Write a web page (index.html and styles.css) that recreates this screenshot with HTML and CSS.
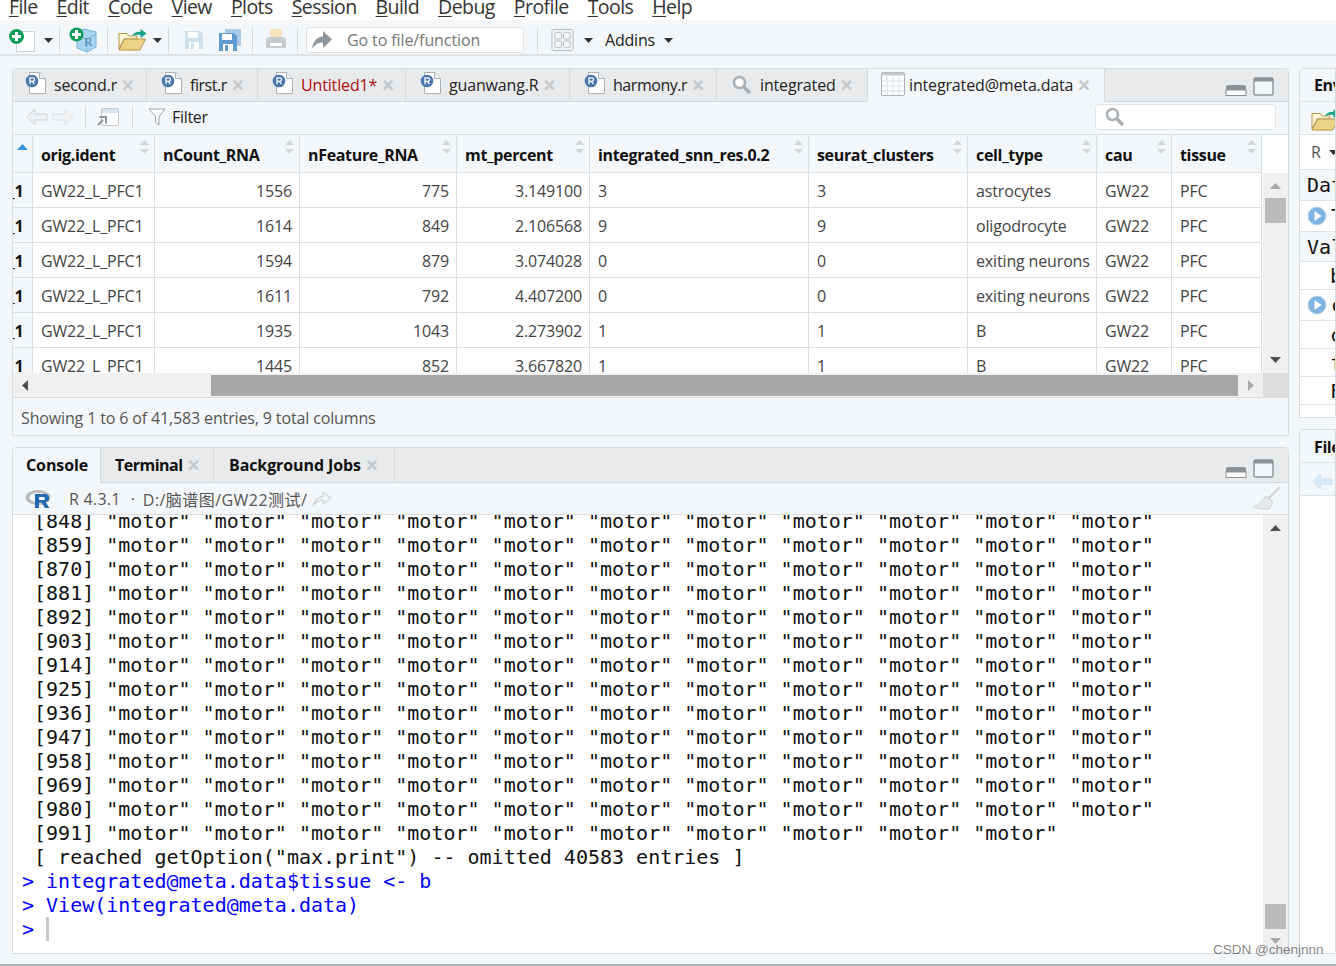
FILE: index.html
```html
<!DOCTYPE html>
<html lang="en">
<head>
<meta charset="utf-8">
<title>RStudio</title>
<link rel="stylesheet" href="styles.css">
</head>
<body>
<svg class="defs" width="0" height="0" aria-hidden="true">
  <defs>
    <symbol id="rdoc" viewBox="0 0 22 24">
      <path d="M4.5 1.5H14.5L20.5 7.5V22.5H4.5Z" fill="#fff" stroke="#a9b0b6"/>
      <path d="M14.5 1.5V7.5H20.5" fill="#eef1f3" stroke="#a9b0b6"/>
      <circle cx="7" cy="10" r="6.3" fill="#4a76ad"/>
      <path d="M5 13.2V6.8H7.8A1.8 1.8 0 0 1 7.8 10.4H5M7.4 10.4L9.4 13.2" fill="none" stroke="#fff" stroke-width="1.3"/>
    </symbol>
    <symbol id="folder" viewBox="0 0 30 24">
      <path d="M2 8V5.5H10L12 8H20V11H7L2 21Z" fill="#fff6d8" stroke="#b2954a"/>
      <path d="M2 22L7.5 11H28.5L23 22Z" fill="#ecd388" stroke="#b2954a"/>
      <path d="M15 8C17 4 21 3.500 23.500 4V1L29.500 5.500L23.500 10V7C20.500 6.500 18 7 15 8Z" fill="#17a589"/>
    </symbol>
    <symbol id="caret" viewBox="0 0 9 5"><path d="M0 0H9L4.500 5Z" fill="#333"/></symbol>
    <symbol id="lens" viewBox="0 0 20 20">
      <circle cx="7.500" cy="7.500" r="5.500" fill="#fff" stroke="#a9b1b6" stroke-width="2.600"/>
      <path d="M11.500 11.500L18 18" stroke="#a9b1b6" stroke-width="3.600"/>
    </symbol>
    <symbol id="sort" viewBox="0 0 9 14"><path d="M4.500 0L9 5H0ZM0 9H9L4.500 14Z" fill="#d3d6d9"/></symbol>
    <symbol id="floppy" viewBox="0 0 20 20">
      <path d="M1 1H16L19 4V19H1Z" fill="currentColor"/>
      <rect x="4" y="2" width="10" height="6" fill="#fff"/>
      <rect x="5" y="12" width="10" height="7" fill="#fff"/>
      <rect x="7" y="13" width="3" height="6" fill="currentColor"/>
    </symbol>
    <symbol id="circle-arrow" viewBox="0 0 20 20">
      <circle cx="10" cy="10" r="9" fill="#7fb3e0" stroke="#b8d3ea"/>
      <path d="M7.500 5L14.500 10L7.500 15Z" fill="#fff"/>
    </symbol>
    <symbol id="min" viewBox="0 0 22 12">
      <path d="M1 10V3.500Q1 1 3.500 1H18.500Q21 1 21 3.500V10Z" fill="#8b9296"/>
      <rect x="1" y="6" width="20" height="5.500" fill="#fff" stroke="#8b9296"/>
    </symbol>
    <symbol id="max" viewBox="0 0 21 19">
      <rect x="1" y="1" width="19" height="17" rx="1.500" fill="#f4f7f9" stroke="#8b9296" stroke-width="1.400"/>
      <rect x="1" y="1" width="19" height="3.500" fill="#8b9296"/>
    </symbol>
  </defs>
</svg>

<div class="app">
  <nav class="menubar">
    <span class="menu"><u>F</u>ile</span>
    <span class="menu"><u>E</u>dit</span>
    <span class="menu"><u>C</u>ode</span>
    <span class="menu"><u>V</u>iew</span>
    <span class="menu"><u>P</u>lots</span>
    <span class="menu"><u>S</u>ession</span>
    <span class="menu"><u>B</u>uild</span>
    <span class="menu"><u>D</u>ebug</span>
    <span class="menu"><u>P</u>rofile</span>
    <span class="menu"><u>T</u>ools</span>
    <span class="menu"><u>H</u>elp</span>
  </nav>

  <div class="toolbar">
    <svg class="i-new" viewBox="0 0 28 24">
      <rect x="8.500" y="3.500" width="18" height="20" fill="#fff" stroke="#cfd4d8"/>
      <circle cx="8.500" cy="8.500" r="7.500" fill="#0f9d58"/>
      <path d="M8.500 4V13M4 8.500H13" stroke="#fff" stroke-width="3"/>
    </svg>
    <svg class="caret c-new"><use href="#caret"/></svg>
    <span class="sep s-1"></span>
    <svg class="i-proj" viewBox="0 0 30 26">
      <path d="M8 5L15 2L27 5V20L18 25L8 21Z" fill="#a9d5ee" stroke="#6fb1d8"/>
      <path d="M8 9L18 12L27 7M18 12V25" fill="none" stroke="#7fbde0"/>
      <circle cx="7.500" cy="7.500" r="7" fill="#0f9d58"/>
      <path d="M7.500 3V12M3 7.500H12" stroke="#fff" stroke-width="3"/>
      <text x="15" y="19" class="cube-r">R</text>
    </svg>
    <span class="sep s-2"></span>
    <svg class="i-open"><use href="#folder"/></svg>
    <svg class="caret c-open"><use href="#caret"/></svg>
    <span class="sep s-3"></span>
    <svg class="i-save"><use href="#floppy"/></svg>
    <svg class="i-saveall" viewBox="0 0 24 24">
      <rect x="7" y="1" width="16" height="17" fill="#a9cbe8"/>
      <path d="M1 5H16L19 8V23H1Z" fill="#5f9ad0"/>
      <rect x="4" y="6" width="10" height="6" fill="#fff"/>
      <rect x="5" y="16" width="10" height="7" fill="#fff"/>
      <rect x="7" y="17" width="3" height="6" fill="#5f9ad0"/>
    </svg>
    <span class="sep s-4"></span>
    <svg class="i-print" viewBox="0 0 22 22">
      <rect x="5" y="0" width="12" height="10" fill="#f2e3bd"/>
      <path d="M1 12Q1 8 5 8H17Q21 8 21 12V19H1Z" fill="#c3cad0"/>
      <rect x="5" y="14" width="12" height="3" fill="#fff"/>
    </svg>
    <span class="sep s-5"></span>
    <div class="goto">
      <svg class="i-goto" viewBox="0 0 20 20"><path d="M0 19C1 11 5 7 11 6.500V1L20 9.500L11 18V12.500C7 12.500 3 14 0 19Z" fill="#8f979e"/></svg>
      <span class="goto-text">Go to file/function</span>
    </div>
    <span class="sep s-6"></span>
    <svg class="i-grid" viewBox="0 0 24 24">
      <rect x="1" y="1" width="22" height="22" rx="2" fill="#f4f7f9" stroke="#b3bac0"/>
      <rect x="4" y="4" width="7" height="7" rx="1" fill="none" stroke="#b3bac0"/>
      <rect x="13" y="4" width="7" height="7" rx="1" fill="none" stroke="#b3bac0"/>
      <rect x="4" y="13" width="7" height="7" rx="1" fill="none" stroke="#b3bac0"/>
      <rect x="13" y="13" width="7" height="7" rx="1" fill="none" stroke="#b3bac0"/>
    </svg>
    <svg class="caret c-grid"><use href="#caret"/></svg>
    <span class="addins">Addins</span>
    <svg class="caret c-addins"><use href="#caret"/></svg>
  </div>

  <div class="workspace">
    <div class="left">
      <section class="pane source">
        <div class="tabs">
          <div class="tab t-second"><svg class="doc"><use href="#rdoc"/></svg><span>second.r</span><b class="x">×</b></div>
          <div class="tab t-first"><svg class="doc"><use href="#rdoc"/></svg><span class="tight">first.r</span><b class="x">×</b></div>
          <div class="tab t-untitled"><svg class="doc"><use href="#rdoc"/></svg><span class="unsaved">Untitled1*</span><b class="x">×</b></div>
          <div class="tab t-guan"><svg class="doc"><use href="#rdoc"/></svg><span>guanwang.R</span><b class="x">×</b></div>
          <div class="tab t-harm"><svg class="doc"><use href="#rdoc"/></svg><span class="tight">harmony.r</span><b class="x">×</b></div>
          <div class="tab t-int"><svg class="tab-lens"><use href="#lens"/></svg><span>integrated</span><b class="x">×</b></div>
          <div class="tab active t-meta">
            <svg class="tab-grid" viewBox="0 0 24 24">
              <rect x="0.500" y="0.500" width="23" height="23" rx="1.500" fill="#fff" stroke="#a9b0b6"/>
              <rect x="0.500" y="0.500" width="23" height="3" fill="#c4c9cd"/>
              <path d="M6 4V23M12 4V23M18 4V23M1 9H23M1 14H23M1 19H23" stroke="#d5deea"/>
            </svg>
            <span>integrated@meta.data</span><b class="x">×</b>
          </div>
          <div class="tab-fill">
            <svg class="pane-min"><use href="#min"/></svg>
            <svg class="pane-max"><use href="#max"/></svg>
          </div>
        </div>
        <div class="filterbar">
          <svg class="nav-back" viewBox="0 0 22 18"><path d="M9 1L1 9L9 17V12H21V6H9Z" fill="#eef1f3" stroke="#cdd2d6"/></svg>
          <svg class="nav-fwd" viewBox="0 0 22 18"><path d="M13 1L21 9L13 17V12H1V6H13Z" fill="#f1f3f5" stroke="#dde0e3"/></svg>
          <span class="sep f-s1"></span>
          <svg class="i-pop" viewBox="0 0 22 18">
            <rect x="4.500" y="0.500" width="17" height="17" rx="1.500" fill="#fff" stroke="#c4cace"/>
            <rect x="5" y="1" width="16" height="4" fill="#d3e5f5"/>
            <path d="M1 17L6 12M2.500 9H9V15.500" fill="none" stroke="#8f979e" stroke-width="2"/>
          </svg>
          <span class="sep f-s2"></span>
          <svg class="i-funnel" viewBox="0 0 18 18"><path d="M1 1H17L11 8.500V17L7.500 14V8.500Z" fill="#fff" stroke="#9aa2a8"/></svg>
          <span class="filter-label">Filter</span>
          <div class="search"><svg class="search-lens"><use href="#lens"/></svg></div>
        </div>

        <div class="dataview">
          <div class="grid-clip">
            <table class="data">
              <colgroup>
                <col class="c0"><col class="c1"><col class="c2"><col class="c3"><col class="c4"><col class="c5"><col class="c6"><col class="c7"><col class="c8"><col class="c9">
              </colgroup>
              <thead>
                <tr>
                  <th class="corner"><svg class="sort-up" viewBox="0 0 11 6"><path d="M5.500 0L11 6H0Z" fill="#3a95e0"/></svg></th>
                  <th>orig.ident<svg class="sort"><use href="#sort"/></svg></th>
                  <th>nCount_RNA<svg class="sort"><use href="#sort"/></svg></th>
                  <th>nFeature_RNA<svg class="sort"><use href="#sort"/></svg></th>
                  <th>mt_percent<svg class="sort"><use href="#sort"/></svg></th>
                  <th>integrated_snn_res.0.2<svg class="sort"><use href="#sort"/></svg></th>
                  <th>seurat_clusters<svg class="sort"><use href="#sort"/></svg></th>
                  <th>cell_type<svg class="sort"><use href="#sort"/></svg></th>
                  <th>cau<svg class="sort"><use href="#sort"/></svg></th>
                  <th>tissue<svg class="sort"><use href="#sort"/></svg></th>
                </tr>
              </thead>
              <tbody>
                <tr><td class="rn">_1</td><td>GW22_L_PFC1</td><td class="n">1556</td><td class="n">775</td><td class="n">3.149100</td><td>3</td><td>3</td><td>astrocytes</td><td>GW22</td><td>PFC</td></tr>
                <tr><td class="rn">_1</td><td>GW22_L_PFC1</td><td class="n">1614</td><td class="n">849</td><td class="n">2.106568</td><td>9</td><td>9</td><td>oligodrocyte</td><td>GW22</td><td>PFC</td></tr>
                <tr><td class="rn">_1</td><td>GW22_L_PFC1</td><td class="n">1594</td><td class="n">879</td><td class="n">3.074028</td><td>0</td><td>0</td><td>exiting neurons</td><td>GW22</td><td>PFC</td></tr>
                <tr><td class="rn">_1</td><td>GW22_L_PFC1</td><td class="n">1611</td><td class="n">792</td><td class="n">4.407200</td><td>0</td><td>0</td><td>exiting neurons</td><td>GW22</td><td>PFC</td></tr>
                <tr><td class="rn">_1</td><td>GW22_L_PFC1</td><td class="n">1935</td><td class="n">1043</td><td class="n">2.273902</td><td>1</td><td>1</td><td>B</td><td>GW22</td><td>PFC</td></tr>
                <tr><td class="rn">_1</td><td>GW22_L_PFC1</td><td class="n">1445</td><td class="n">852</td><td class="n">3.667820</td><td>1</td><td>1</td><td>B</td><td>GW22</td><td>PFC</td></tr>
              </tbody>
            </table>
          </div>
          <div class="vscroll">
            <svg class="arrow-up" viewBox="0 0 11 6"><path d="M5.500 0L11 6H0Z" fill="#a8a8a8"/></svg>
            <span class="vthumb"></span>
            <svg class="arrow-down" viewBox="0 0 11 6"><path d="M0 0H11L5.500 6Z" fill="#505050"/></svg>
          </div>
        </div>
        <div class="hscroll">
          <svg class="arrow-left" viewBox="0 0 6 11"><path d="M6 0V11L0 5.500Z" fill="#505050"/></svg>
          <span class="hthumb"></span>
          <svg class="arrow-right" viewBox="0 0 6 11"><path d="M0 0V11L6 5.500Z" fill="#a8a8a8"/></svg>
          <span class="hcorner"></span>
        </div>
        <div class="status">Showing 1 to 6 of 41,583 entries, 9 total columns</div>
      </section>

      <section class="pane console">
        <div class="tabs ctabs">
          <div class="ctab active c-console">Console</div>
          <div class="ctab c-terminal">Terminal<b class="x">×</b></div>
          <div class="ctab c-jobs">Background Jobs<b class="x">×</b></div>
          <div class="tab-fill">
            <svg class="pane-min"><use href="#min"/></svg>
            <svg class="pane-max"><use href="#max"/></svg>
          </div>
        </div>
        <div class="consolebar">
          <svg class="r-logo" viewBox="0 0 28 20">
            <ellipse cx="13" cy="8.500" rx="12.500" ry="7.500" fill="#b9bcc0"/>
            <ellipse cx="13" cy="8.500" rx="8.500" ry="4.800" fill="#f4f7f9"/>
            <path d="M10 19V5H19.500A4 4 0 0 1 20.500 13L24.500 19H20L16.500 13.500H14V19ZM14 8V11H18.500A1.500 1.500 0 0 0 18.500 8Z" fill="#2268b5" fill-rule="evenodd"/>
          </svg>
          <span class="rver">R 4.3.1</span>
          <span class="dot">·</span>
          <span class="rpath">D:/脑谱图/GW22测试/</span>
          <svg class="i-wd" viewBox="0 0 20 16"><path d="M1 15C2 9 6 6 11 5.500V1L19 7L11 13V9C7 9 4 10.500 1 15Z" fill="#f4f7f9" stroke="#d2d6da" stroke-width="1.300"/></svg>
          <svg class="i-broom" viewBox="0 0 30 26">
            <path d="M28 1L16 13" stroke="#cfd3d6" stroke-width="2"/>
            <path d="M14 10L21 16L17 23Q8 24 1 21Q8 19 14 10Z" fill="#e6e9eb" stroke="#cfd3d6"/>
          </svg>
        </div>
        <div class="consolebody">
          <pre class="out"> [848] "motor" "motor" "motor" "motor" "motor" "motor" "motor" "motor" "motor" "motor" "motor"
 [859] "motor" "motor" "motor" "motor" "motor" "motor" "motor" "motor" "motor" "motor" "motor"
 [870] "motor" "motor" "motor" "motor" "motor" "motor" "motor" "motor" "motor" "motor" "motor"
 [881] "motor" "motor" "motor" "motor" "motor" "motor" "motor" "motor" "motor" "motor" "motor"
 [892] "motor" "motor" "motor" "motor" "motor" "motor" "motor" "motor" "motor" "motor" "motor"
 [903] "motor" "motor" "motor" "motor" "motor" "motor" "motor" "motor" "motor" "motor" "motor"
 [914] "motor" "motor" "motor" "motor" "motor" "motor" "motor" "motor" "motor" "motor" "motor"
 [925] "motor" "motor" "motor" "motor" "motor" "motor" "motor" "motor" "motor" "motor" "motor"
 [936] "motor" "motor" "motor" "motor" "motor" "motor" "motor" "motor" "motor" "motor" "motor"
 [947] "motor" "motor" "motor" "motor" "motor" "motor" "motor" "motor" "motor" "motor" "motor"
 [958] "motor" "motor" "motor" "motor" "motor" "motor" "motor" "motor" "motor" "motor" "motor"
 [969] "motor" "motor" "motor" "motor" "motor" "motor" "motor" "motor" "motor" "motor" "motor"
 [980] "motor" "motor" "motor" "motor" "motor" "motor" "motor" "motor" "motor" "motor" "motor"
 [991] "motor" "motor" "motor" "motor" "motor" "motor" "motor" "motor" "motor" "motor"
 [ reached getOption("max.print") -- omitted 40583 entries ]
<span class="cmd">&gt; integrated@meta.data$tissue &lt;- b
&gt; View(integrated@meta.data)
&gt; <span class="cursor"></span></span></pre>
          <div class="vscroll cscroll">
            <svg class="arrow-up dark" viewBox="0 0 11 6"><path d="M5.500 0L11 6H0Z" fill="#505050"/></svg>
            <span class="vthumb cthumb"></span>
            <svg class="arrow-down light" viewBox="0 0 11 6"><path d="M0 0H11L5.500 6Z" fill="#a8a8a8"/></svg>
          </div>
        </div>
      </section>
    </div>

    <div class="right">
      <section class="pane env">
        <div class="rtab">Environment</div>
        <div class="rtools env-tools"><svg class="r-folder"><use href="#folder"/></svg></div>
        <div class="rlang">R<svg class="caret r-caret"><use href="#caret"/></svg></div>
        <div class="erow ehead h31">Data</div>
        <div class="erow h31"><svg class="ci"><use href="#circle-arrow"/></svg><span class="ev">T</span></div>
        <div class="erow ehead h30">Values</div>
        <div class="erow h28 indent"><span class="ev">b</span></div>
        <div class="erow h31"><svg class="ci"><use href="#circle-arrow"/></svg><span class="ev">c</span></div>
        <div class="erow h28 indent"><span class="ev">c</span></div>
        <div class="erow h28 indent"><span class="ev">f</span></div>
        <div class="erow h28 indent"><span class="ev">F</span></div>
      </section>
      <section class="pane files">
        <div class="rtab files-tab">Files</div>
        <div class="rtools files-tools"><svg class="r-back" viewBox="0 0 22 18"><path d="M9 1L1 9L9 17V12H21V6H9Z" fill="#d9e9f5" stroke="#cfe2f1"/></svg></div>
      </section>
    </div>
  </div>
  <div class="bottomline"></div>
  <div class="watermark">CSDN @chenjnnn</div>
</div>
</body>
</html>
```
FILE: styles.css
```css
* { box-sizing: border-box; }
html, body { margin: 0; padding: 0; width: 1336px; height: 966px; overflow: hidden; background: #f4f7f9; }
body { font-family: "Open Sans", "Noto Sans", sans-serif; font-size: 16px; color: #222; }
.defs { position: absolute; }
svg { display: block; flex: none; }

.app { position: relative; display: flex; flex-direction: column; width: 1336px; height: 966px; overflow: hidden; }

/* menu */
.menubar { height: 20px; background: #fff; display: flex; align-items: flex-end; overflow: hidden; padding: 0 0 0 9px; gap: 19px; line-height: 20px; flex: none; }
.menu { font-size: 19.500px; letter-spacing: -0.570px; position: relative; top: -3px; color: #333; white-space: nowrap; }
.menu u { text-underline-offset: 2px; text-decoration-thickness: 1px; }
.cube-r { font-family: "Liberation Serif", serif; font-size: 13px; fill: #4f86b8; }

/* main toolbar */
.toolbar { height: 36px; flex: none; display: flex; align-items: center; padding: 6px 0 0 8px; border-bottom: 2px solid #dfe3e6; background: #f4f7f9; }
.sep { width: 1px; height: 24px; background: #d6dadd; flex: none; }
.caret { width: 9px; height: 5px; }
.i-new { width: 28px; height: 24px; }
.c-new { margin-left: 8px; }
.s-1 { margin-left: 6px; }
.i-proj { width: 30px; height: 26px; margin-left: 9px; }
.s-2 { margin-left: 8px; }
.i-open { width: 30px; height: 24px; margin-left: 9px; }
.c-open { margin-left: 6px; }
.s-3 { margin-left: 6px; }
.i-save { width: 20px; height: 20px; margin-left: 15px; color: #cfe0ee; }
.i-saveall { width: 24px; height: 24px; margin-left: 14px; }
.s-4 { margin-left: 10px; }
.i-print { width: 22px; height: 22px; margin-left: 12px; }
.s-5 { margin-left: 10px; }
.goto { width: 218px; height: 26px; margin-left: 8px; background: #fff; border: 1px solid #dfe3e6; border-radius: 4px; display: flex; align-items: center; padding-left: 5px; }
.i-goto { width: 20px; height: 20px; }
.goto-text { margin-left: 15px; color: #777; font-size: 16px; letter-spacing: -0.100px; white-space: nowrap; }
.s-6 { margin-left: 13px; }
.i-grid { width: 23px; height: 24px; margin-left: 13px; }
.c-grid { margin-left: 10px; }
.addins { margin-left: 12px; letter-spacing: -0.200px; color: #222; }
.c-addins { margin-left: 9px; }

/* workspace */
.workspace { flex: none; height: 908px; display: flex; padding: 12px 0 0 12px; }
.left { width: 1277px; flex: none; display: flex; flex-direction: column; gap: 11px; }
.right { margin-left: 10px; flex: 1; display: flex; flex-direction: column; gap: 11px; min-width: 0; }

.pane { border: 1px solid #d9dde0; border-radius: 4px 4px 0 0; overflow: hidden; background: #f4f7f9; display: flex; flex-direction: column; }

/* tabs */
.tabs { height: 33px; flex: none; display: flex; background: #e8eaec; }
.tab { height: 33px; display: flex; align-items: center; border-right: 1px solid #d6dadd; border-bottom: 1px solid #d6dadd; padding-left: 14px; white-space: nowrap; font-size: 16px; letter-spacing: -0.150px; flex: none; }
.tab.active { background: #f4f7f9; border-bottom-color: #f4f7f9; }
.tab .tight { letter-spacing: -0.450px; }
.tab-fill { flex: 1; display: flex; align-items: flex-end; justify-content: flex-end; padding: 0 14px 5px 0; gap: 6px; border-bottom: 1px solid #d6dadd; }
.pane-min { width: 22px; height: 12px; }
.pane-max { width: 21px; height: 19px; }
.doc { width: 22px; height: 24px; margin-right: 7px; position: relative; top: -2px; }
.tab-lens { width: 20px; height: 20px; margin-right: 8px; }
.tab-grid { width: 24px; height: 24px; margin-right: 4px; position: relative; top: -1px; }
.x { color: #c4c8cb; font-size: 20px; font-weight: 700; margin-left: 5px; letter-spacing: 0; font-family: "Liberation Sans", sans-serif; line-height: 1; }
.unsaved { color: #b00d0d; }
.t-second { width: 134px; padding-left: 12px; }
.t-first { width: 111px; }
.t-untitled { width: 148px; }
.t-guan { width: 164px; }
.t-harm { width: 147px; }
.t-int { width: 151px; padding-left: 15px; }
.t-meta { width: 237px; padding-left: 13px; }

/* filter bar */
.filterbar { height: 33px; flex: none; display: flex; align-items: center; padding: 0 0 3px 13px; border-bottom: 1px solid #d9dde0; }
.nav-back, .nav-fwd { width: 22px; height: 18px; }
.nav-fwd { margin-left: 4px; }
.f-s1 { height: 22px; margin-left: 11px; }
.i-pop { width: 22px; height: 18px; margin-left: 11px; }
.f-s2 { height: 22px; margin-left: 13px; }
.i-funnel { width: 18px; height: 18px; margin-left: 15px; }
.filter-label { margin-left: 6px; letter-spacing: -0.300px; }
.search { width: 181px; height: 26px; margin-left: 887px; background: #fff; border: 1px solid #dfe3e6; border-radius: 4px; display: flex; align-items: center; padding-left: 9px; }
.search-lens { width: 20px; height: 20px; }

/* data table */
.dataview { height: 238px; flex: none; display: flex; background: #fff; }
.grid-clip { width: 1250px; height: 238px; overflow: hidden; flex: none; }
.data { border-collapse: separate; border-spacing: 0; table-layout: fixed; width: 1249px; font-size: 16px; letter-spacing: -0.150px; }
.c0 { width: 20px; } .c1 { width: 122px; } .c2 { width: 145px; } .c3 { width: 157px; } .c4 { width: 133px; }
.c5 { width: 219px; } .c6 { width: 159px; } .c7 { width: 129px; } .c8 { width: 75px; } .c9 { width: 90px; }
.data th { height: 38px; background: #f4f7f9; border-right: 1px solid #dcdfe2; border-bottom: 1px solid #dcdfe2; text-align: left; padding: 3px 0 0 8px; font-weight: 700; letter-spacing: -0.330px; color: #111; position: relative; white-space: nowrap; overflow: hidden; }
.data td { height: 35px; border-right: 1px solid #dcdfe2; border-bottom: 1px solid #dcdfe2; padding: 1px 7px 0 8px; color: #444; white-space: nowrap; overflow: hidden; }
.data td.n { text-align: right; }
.data td.rn { background: #f4f7f9; font-weight: 700; color: #111; padding: 1px 0 0 0; text-indent: -5px; }
.sort { width: 9px; height: 14px; position: absolute; right: 5px; top: 5px; }
.sort-up { width: 11px; height: 6px; position: absolute; left: 4px; top: 9px; }

.vscroll { width: 25px; flex: none; margin-top: 38px; background: #f0f0f0; display: flex; flex-direction: column; align-items: center; padding-top: 10px; }
.arrow-up, .arrow-down { width: 11px; height: 6px; }
.vthumb { width: 21px; height: 25px; background: #bcbcbc; margin-top: 9px; flex: none; }
.arrow-down { margin-top: 134px; }

.hscroll { height: 25px; flex: none; display: flex; align-items: center; background: #f0f0f0; border-bottom: 1px solid #d9dde0; padding-left: 9px; position: relative; }
.arrow-left, .arrow-right { width: 6px; height: 11px; }
.hthumb { width: 1027px; height: 21px; background: #a8a8a8; margin-left: 183px; flex: none; }
.arrow-right { margin-left: 10px; }
.hcorner { width: 25px; height: 24px; background: #dcdcdc; flex: none; margin-left: auto; }

.status { flex: 1; display: flex; align-items: center; padding: 2px 0 0 8px; color: #555; letter-spacing: -0.140px; }
.source { height: 368px; flex: none; }

/* console */
.console { flex: none; height: 507px; }
.ctabs { height: 35px; }
.ctab { height: 35px; display: flex; align-items: center; padding-left: 14px; font-weight: 700; font-size: 16px; letter-spacing: -0.100px; border-right: 1px solid #d6dadd; border-bottom: 1px solid #d6dadd; color: #111; flex: none; }
.ctab.active { background: #f4f7f9; border-bottom-color: #f4f7f9; }
.c-console { width: 88px; padding-left: 13px; }
.c-terminal { width: 113px; letter-spacing: -0.500px; }
.c-jobs { width: 181px; padding-left: 15px; }
.ctabs .tab-fill { padding-bottom: 4px; }
.consolebar { height: 32px; flex: none; display: flex; align-items: center; padding-left: 12px; border-bottom: 1px solid #d9dde0; color: #555; position: relative; }
.r-logo { width: 28px; height: 20px; }
.rver { margin-left: 16px; letter-spacing: 0.250px; }
.dot { margin-left: 10px; }
.rpath { margin-left: 8px; letter-spacing: 0.450px; font-family: "Open Sans", "Noto Sans CJK SC", sans-serif; }
.i-wd { width: 20px; height: 16px; margin-left: 5px; }
.i-broom { width: 30px; height: 26px; margin-left: auto; margin-right: 6px; }

.consolebody { flex: 1; min-height: 0; display: flex; background: #fff; overflow: hidden; }
.out { margin: 0; flex: 1; min-width: 0; padding: 0 0 12px 9px; font-family: "DejaVu Sans Mono", monospace; font-size: 20px; line-height: 24px; color: #111; overflow: hidden; display: flex; flex-direction: column; justify-content: flex-end; white-space: pre; }
.cmd { color: #0000ff; display: block; }
.cursor { display: inline-block; width: 3px; height: 24px; background: #c9c9c9; vertical-align: top; }
.cscroll { margin-top: 0; }
.cthumb { margin-top: 373px; }
.arrow-down.light { margin-top: 9px; }

/* right panes */
.env { height: 350px; flex: none; border-radius: 4px 0 0 0; background: #fff; }
.files { height: 525px; flex: none; border-radius: 4px 0 0 0; background: #fff; }
.rtab { height: 33px; flex: none; background: #f4f7f9; border-bottom: 1px solid #e0e3e6; font-weight: 700; color: #111; display: flex; align-items: center; padding-left: 14px; letter-spacing: -0.400px; white-space: nowrap; }
.rtools { height: 33px; flex: none; background: #f4f7f9; border-bottom: 1px solid #e0e3e6; display: flex; align-items: center; padding-left: 10px; }
.env-tools { padding-top: 3px; }
.files-tab { padding-top: 2px; }
.files-tools { padding-top: 5px; }
.r-folder { width: 30px; height: 24px; }
.r-back { width: 21px; height: 19px; margin-left: 2px; }
.rlang { height: 35px; flex: none; background: #fff; border-bottom: 1px solid #dfe2e5; display: flex; align-items: center; padding-left: 11px; color: #555; }
.r-caret { margin-left: 8px; }
.erow { flex: none; border-bottom: 1px solid #dfe2e5; display: flex; align-items: center; padding-left: 7px; font-family: "DejaVu Sans Mono", monospace; font-size: 20px; color: #111; white-space: nowrap; }
.ehead { background: #f4f7f9; }
.h31 { height: 31px; }
.h30 { height: 30px; }
.h28 { height: 28px; }
.erow.indent { padding-left: 30px; }
.ci { width: 20px; height: 20px; margin-right: 4px; }

.bottomline { height: 2px; flex: none; background: #b0b5b9; }
.watermark { position: absolute; left: 1213px; top: 942px; font-family: "Liberation Sans", sans-serif; font-size: 13.500px; color: rgba(90, 90, 90, .75); white-space: nowrap; }
```
